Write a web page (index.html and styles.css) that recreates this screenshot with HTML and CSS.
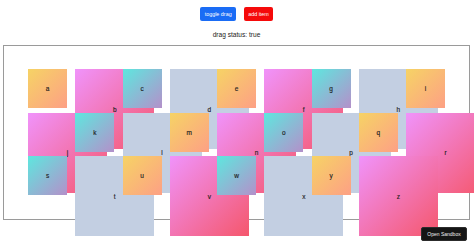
FILE: index.html
```html
<!DOCTYPE html>
<html>
<head>
<meta charset="utf-8">
<link rel="stylesheet" href="styles.css">
</head>
<body>
<div class="toolbar">
  <button class="btn btn-blue">toggle drag</button>
  <button class="btn btn-red">add item</button>
</div>
<p class="status">drag status: true</p>
<div class="board">
  <div class="grid">
    <div class="item small orange"><span>a</span></div>
    <div class="item large pink"><span>b</span></div>
    <div class="item small teal"><span>c</span></div>
    <div class="item large gray"><span>d</span></div>
    <div class="item small orange"><span>e</span></div>
    <div class="item large pink"><span>f</span></div>
    <div class="item small teal"><span>g</span></div>
    <div class="item large gray"><span>h</span></div>
    <div class="item small orange"><span>i</span></div>
    <div class="item large pink"><span>j</span></div>
    <div class="item small teal"><span>k</span></div>
    <div class="item large gray"><span>l</span></div>
    <div class="item small orange"><span>m</span></div>
    <div class="item large pink"><span>n</span></div>
    <div class="item small teal"><span>o</span></div>
    <div class="item large gray"><span>p</span></div>
    <div class="item small orange"><span>q</span></div>
    <div class="item large pink"><span>r</span></div>
    <div class="item small teal"><span>s</span></div>
    <div class="item large gray"><span>t</span></div>
    <div class="item small orange"><span>u</span></div>
    <div class="item large pink"><span>v</span></div>
    <div class="item small teal"><span>w</span></div>
    <div class="item large gray"><span>x</span></div>
    <div class="item small orange"><span>y</span></div>
    <div class="item large pink"><span>z</span></div>
  </div>
</div>
<a class="sandbox">Open Sandbox</a>
</body>
</html>
```

FILE: styles.css
```css
html, body {
  margin: 0;
  padding: 0;
  overflow: hidden;
}
body {
  width: 474px;
  height: 248px;
  font-family: "Liberation Sans", Arial, sans-serif;
  color: #222;
  padding: 0 4px 0 3px;
  box-sizing: border-box;
}
.toolbar {
  display: flex;
  justify-content: center;
  gap: 8px;
  padding-top: 7px;
}
.btn {
  height: 14px;
  border: none;
  border-radius: 2px;
  color: #fff;
  font-family: "Liberation Sans", Arial, sans-serif;
  font-size: 5.4px;
  padding: 0 4.5px;
  line-height: 14px;
}
.btn-blue { background: #1a6cf5; }
.btn-red { background: #f50a0a; padding: 0 4px; }
.status {
  margin: 0;
  height: 24px;
  line-height: 28px;
  text-align: center;
  font-size: 6.6px;
  color: #222;
}
.board {
  border: 1px solid #9a9a9a;
  height: 175px;
  padding: 23px 0 0 24px;
  box-sizing: border-box;
}
.grid {
  display: grid;
  grid-template-columns: repeat(9, 47.25px);
  grid-auto-rows: 43.5px;
}
.item {
  display: flex;
  align-items: center;
  justify-content: center;
  align-self: start;
  justify-self: start;
  font-size: 6.5px;
  color: #1e1e1e;
  -webkit-text-stroke: 0.15px #1e1e1e;
}
.small { width: 39px; height: 39px; }
.large { width: 79px; height: 80px; }
.orange { background: linear-gradient(135deg, #f6d365 0%, #fda085 100%); }
.pink { background: linear-gradient(135deg, #f093fb 0%, #f5576c 100%); }
.teal { background: linear-gradient(135deg, #5ee7df 0%, #b490ca 100%); }
.gray { background: #c3cfe2; }
.sandbox {
  position: fixed;
  right: 7px;
  bottom: 7px;
  width: 46px;
  height: 14px;
  background: #151515;
  border: 1px solid #2c2c2c;
  box-sizing: border-box;
  border-radius: 2px;
  color: #f0f0f0;
  font-size: 5px;
  line-height: 12px;
  text-align: center;
}
```
